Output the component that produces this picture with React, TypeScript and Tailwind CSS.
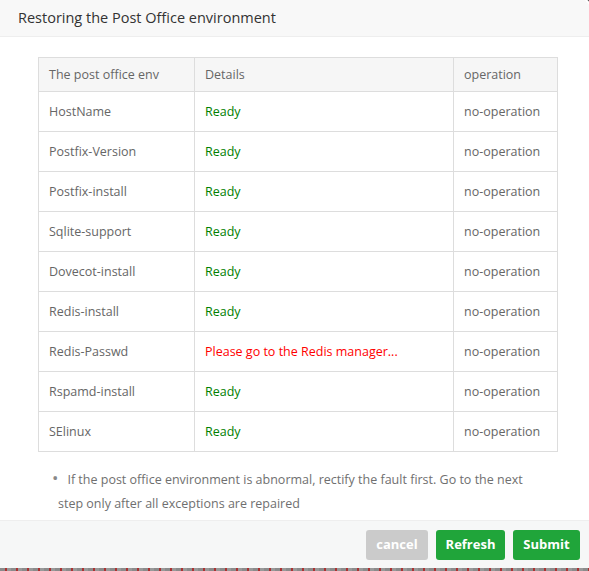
import React from "react";

const rows: { name: string; detail: string; ok: boolean }[] = [
  { name: "HostName", detail: "Ready", ok: true },
  { name: "Postfix-Version", detail: "Ready", ok: true },
  { name: "Postfix-install", detail: "Ready", ok: true },
  { name: "Sqlite-support", detail: "Ready", ok: true },
  { name: "Dovecot-install", detail: "Ready", ok: true },
  { name: "Redis-install", detail: "Ready", ok: true },
  { name: "Redis-Passwd", detail: "Please go to the Redis manager...", ok: false },
  { name: "Rspamd-install", detail: "Ready", ok: true },
  { name: "SElinux", detail: "Ready", ok: true },
];

export default function App() {
  return (
    <div
      className="relative w-[589px] h-[571px] bg-white flex flex-col overflow-hidden text-[12.5px] text-[#666]"
      style={{ fontFamily: '"Open Sans", "Noto Sans", sans-serif' }}
    >
      <div className="h-[37px] shrink-0 bg-[#f8f8f8] border-b border-[#eeeeee] pl-[18px] flex items-center text-[14.5px] text-[#333]">
        Restoring the Post Office environment
      </div>
      <div className="absolute left-[582px] top-[-28px] w-[36px] h-[36px] rounded-full bg-[#555] border-2 border-white" />

      <div className="pl-[38px] pt-[20px]">
        <table className="w-[519px] border-collapse table-fixed">
          <colgroup>
            <col className="w-[156px]" />
            <col className="w-[259px]" />
            <col className="w-[104px]" />
          </colgroup>
          <thead>
            <tr className="h-[34px] bg-[#f6f6f6]">
              <th className="border border-[#dddddd] px-[10px] pt-[2px] text-left font-normal">The post office env</th>
              <th className="border border-[#dddddd] px-[10px] pt-[2px] text-left font-normal">Details</th>
              <th className="border border-[#dddddd] px-[10px] pt-[2px] text-left font-normal">operation</th>
            </tr>
          </thead>
          <tbody>
            {rows.map((r) => (
              <tr key={r.name} className="h-[40px]">
                <td className="border border-[#dddddd] px-[10px] pt-[2px]">{r.name}</td>
                <td className={`border border-[#dddddd] px-[10px] pt-[2px] ${r.ok ? "text-[#008000]" : "text-[#ff0000]"}`}>
                  {r.detail}
                </td>
                <td className="border border-[#dddddd] px-[10px] pt-[2px]">no-operation</td>
              </tr>
            ))}
          </tbody>
        </table>
      </div>

      <div className="pt-[16px] pl-[58px] pr-[48px] leading-[24px] text-[#6f6f6f] flex-1">
        <span className="-ml-[6px] mr-[9px] text-[#888] text-[17px] leading-[10px]">•</span>
        If the post office environment is abnormal, rectify the fault first. Go to the next step only after all
        exceptions are repaired
      </div>

      <div className="h-[48px] shrink-0 bg-[#f6f7f7] border-t border-[#eeeeee] flex items-center justify-end gap-[8px] pr-[9px]">
        <button className="w-[62px] h-[30px] rounded-[3px] bg-[#cbcbcb] text-white font-bold text-[13px]">cancel</button>
        <button className="w-[69px] h-[30px] rounded-[3px] bg-[#20a53a] text-white font-bold text-[13px]">Refresh</button>
        <button className="w-[67px] h-[30px] rounded-[3px] bg-[#20a53a] text-white font-bold text-[13px]">Submit</button>
      </div>
      <div className="h-[3px] shrink-0 bg-[repeating-linear-gradient(90deg,#8b8b8b_0px,#8b8b8b_5px,#a33_5px,#a33_7px,#999_7px,#999_11px)]" />
    </div>
  );
}
